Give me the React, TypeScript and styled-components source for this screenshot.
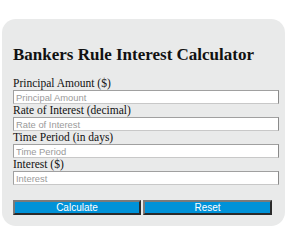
import React from "react";
import styled, { createGlobalStyle } from "styled-components";

const Global = createGlobalStyle`
  html, body { margin: 0; padding: 0; background: #ffffff; }
  body { font-family: "Liberation Serif", "Times New Roman", serif; }
`;

const Page = styled.div`
  padding: 19px 0 0 2px;
`;

const Card = styled.div`
  width: 283px;
  box-sizing: border-box;
  background: #e9eaea;
  border-radius: 14px;
  padding: 11px 6px 11px 11px;
`;

const Title = styled.h2`
  margin: 14px 0 12px 0;
  font-family: "Liberation Serif", "Times New Roman", serif;
  font-weight: bold;
  font-size: 17px;
  line-height: 21px;
  color: #111;
`;

const Form = styled.div`
  display: flex;
  flex-direction: column;
`;

const Label = styled.label`
  font-family: "Liberation Serif", "Times New Roman", serif;
  font-size: 11.5px;
  line-height: 13px;
  color: #111;
`;

const Input = styled.input`
  box-sizing: border-box;
  width: 266px;
  height: 14px;
  margin: 0;
  padding: 0 2px;
  border: 1px solid #a0a0a0;
  border-right-color: #8a8a8a;
  border-bottom-color: #c8c8c8;
  background: #fff;
  font-family: "Liberation Sans", Arial, sans-serif;
  font-size: 9.4px;
  color: #333;
  &::placeholder { color: #9a9a9a; }
`;

const Buttons = styled.div`
  display: flex;
  gap: 2px;
  margin-top: 15px;
`;

const Button = styled.button<{ $w: number }>`
  box-sizing: border-box;
  width: ${(p) => p.$w}px;
  height: 15px;
  padding: 0;
  background: #0092d8;
  border: 2px solid;
  border-color: #7a7a7a #2a2a2a #2a2a2a #7a7a7a;
  color: #fff;
  font-family: "Liberation Sans", Arial, sans-serif;
  font-size: 10px;
  line-height: 10px;
`;

const fields = [
  ["Principal Amount ($)", "Principal Amount"],
  ["Rate of Interest (decimal)", "Rate of Interest"],
  ["Time Period (in days)", "Time Period"],
  ["Interest ($)", "Interest"],
];

export default function App() {
  return (
    <Page>
      <Global />
      <Card>
        <Title>Bankers Rule Interest Calculator</Title>
        <Form>
          {fields.map(([l, p]) => (
            <React.Fragment key={l}>
              <Label>{l}</Label>
              <Input placeholder={p} />
            </React.Fragment>
          ))}
        </Form>
        <Buttons>
          <Button $w={128}>Calculate</Button>
          <Button $w={129}>Reset</Button>
        </Buttons>
      </Card>
    </Page>
  );
}
